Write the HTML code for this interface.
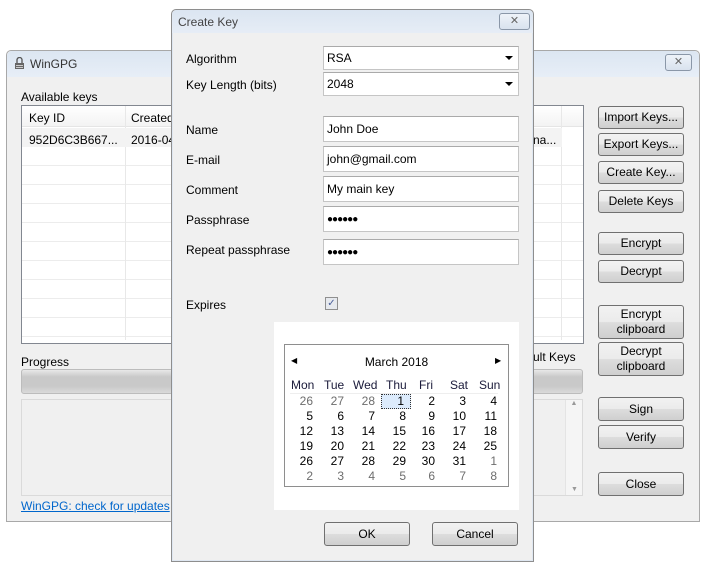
<!DOCTYPE html>
<html><head><meta charset="utf-8"><style>
*{box-sizing:border-box;margin:0;padding:0}
body{width:709px;height:568px;background:#fff;position:relative;overflow:hidden;font-family:"Liberation Sans",sans-serif;font-size:12px;color:#000}
.a{position:absolute}
.btn{position:absolute;border:1px solid #707070;border-radius:3px;background:linear-gradient(#f2f2f2 0%,#ebebeb 50%,#dddddd 51%,#cfcfcf 100%);text-align:center;font-size:12px;display:flex;align-items:center;justify-content:center;line-height:15px;color:#000}
.tb{position:absolute;background:#fff;border:1px solid #c5c5c5;border-top-color:#aaa;padding-left:3px;font-size:12px;display:flex;align-items:center}
.lbl{position:absolute;font-size:12px}
.cal span{position:absolute;width:22px;text-align:right;font-family:"Liberation Sans",sans-serif;font-size:12px}
.g{color:#6d6d6d}
.arr{position:absolute;right:5px;top:9px;width:0;height:0;border-left:4px solid transparent;border-right:4px solid transparent;border-top:4px solid #000}
</style></head><body>
<div class="a" style="left:6px;top:50px;width:694px;height:472px;background:#f0f0f0;border:1px solid #a8a8a8;border-radius:5px 5px 0 0;"></div>
<div class="a" style="left:7px;top:51px;width:692px;height:26px;background:linear-gradient(#dce6f2,#e7eef7);border-radius:5px 5px 0 0"></div>
<div class="a" style="left:14px;top:57px;width:11px;height:13px">
<svg width="11" height="13"><path d="M3 6V3a2.5 2.5 0 015 0v3" fill="none" stroke="#555" stroke-width="1.3"/><rect x="1" y="6" width="9" height="6" fill="#666"/><rect x="2" y="8" width="7" height="1" fill="#ccc"/><rect x="2" y="10" width="7" height="1" fill="#ccc"/></svg></div>
<div class="lbl" style="left:30px;top:57px;font-size:12px;color:#333">WinGPG</div>
<div class="a" style="left:665px;top:54px;width:27px;height:17px;border:1px solid #8a97a8;border-radius:3px;background:linear-gradient(#eef3f9,#d9e2ee);text-align:center;font-size:11px;line-height:14px;color:#666">✕</div>
<div class="lbl" style="left:21px;top:90px">Available keys</div>
<div class="a" style="left:21px;top:105px;width:563px;height:239px;background:#fff;border:1px solid #828790"></div>
<div class="a" style="left:22px;top:106px;width:561px;height:21px;background:linear-gradient(#fff,#f3f3f3);border-bottom:1px solid #e5e5e5"></div>
<div class="a" style="left:125px;top:106px;width:1px;height:234px;background:#e8e8e8"></div>
<div class="a" style="left:561px;top:106px;width:1px;height:234px;background:#e8e8e8"></div>
<div class="lbl" style="left:29px;top:111px">Key ID</div>
<div class="lbl" style="left:131px;top:111px">Created</div>
<div class="a" style="left:22px;top:128px;width:540px;height:19px;background:#f3f3f3"></div>
<div class="lbl" style="left:29px;top:133px">952D6C3B667...</div>
<div class="lbl" style="left:131px;top:133px">2016-04</div>
<div class="lbl" style="left:533px;top:133px">na...</div>
<div class="a" style="left:22px;top:147px;width:561px;height:192px;background:repeating-linear-gradient(#fff 0 18px,#ececec 18px 19px)"></div>
<div class="a" style="left:125px;top:147px;width:1px;height:192px;background:#e8e8e8"></div>
<div class="a" style="left:561px;top:147px;width:1px;height:192px;background:#e8e8e8"></div>
<div class="lbl" style="left:21px;top:355px">Progress</div>
<div class="lbl" style="left:533px;top:350px">ult Keys</div>
<div class="a" style="left:21px;top:369px;width:562px;height:25px;border:1px solid #bcbcbc;border-radius:3px;background:linear-gradient(#e8e8e8,#c9c9c9 30%,#c9c9c9 70%,#dadada)"></div>
<div class="a" style="left:21px;top:399px;width:562px;height:97px;border:1px solid #dadada;background:#f0f0f0"></div>
<div class="a" style="left:565px;top:400px;width:17px;height:95px;background:#f5f5f5;border-left:1px solid #e4e4e4;font-size:7px;color:#999;text-align:center">▲<div style="position:absolute;bottom:2px;width:17px">▼</div></div>
<div class="lbl" style="left:21px;top:499px;color:#0066cc;text-decoration:underline">WinGPG: check for updates</div>
<div class="btn" style="left:598px;top:106px;width:86px;height:23px">Import Keys...</div>
<div class="btn" style="left:598px;top:133px;width:86px;height:23px">Export Keys...</div>
<div class="btn" style="left:598px;top:161px;width:86px;height:23px">Create Key...</div>
<div class="btn" style="left:598px;top:190px;width:86px;height:23px">Delete Keys</div>
<div class="btn" style="left:598px;top:232px;width:86px;height:23px">Encrypt</div>
<div class="btn" style="left:598px;top:260px;width:86px;height:23px">Decrypt</div>
<div class="btn" style="left:598px;top:305px;width:86px;height:34px">Encrypt<br>clipboard</div>
<div class="btn" style="left:598px;top:342px;width:86px;height:34px">Decrypt<br>clipboard</div>
<div class="btn" style="left:598px;top:397px;width:86px;height:24px">Sign</div>
<div class="btn" style="left:598px;top:425px;width:86px;height:24px">Verify</div>
<div class="btn" style="left:598px;top:472px;width:86px;height:24px">Close</div>

<div class="a" style="left:171px;top:9px;width:363px;height:553px;background:#f0f0f0;border:1px solid #8e8e8e;border-radius:5px 5px 0 0;box-shadow:0 0 0 1px #dfe7f1 inset"></div>
<div class="a" style="left:172px;top:10px;width:361px;height:23px;background:linear-gradient(#dbe5f1,#e6edf6);border-radius:5px 5px 0 0"></div>
<div class="lbl" style="left:178px;top:15px;color:#444">Create Key</div>
<div class="a" style="left:499px;top:13px;width:31px;height:17px;border:1px solid #8a97a8;border-radius:3px;background:linear-gradient(#eef3f9,#d9e2ee);text-align:center;font-size:11px;line-height:14px;color:#666">✕</div>
<div class="lbl" style="left:186px;top:52px">Algorithm</div>
<div class="lbl" style="left:186px;top:78px">Key Length (bits)</div>
<div class="tb" style="left:323px;top:46px;width:196px;height:24px;align-items:flex-start;padding-top:4px">RSA<span class="arr"></span></div>
<div class="tb" style="left:323px;top:72px;width:196px;height:24px;align-items:flex-start;padding-top:4px">2048<span class="arr"></span></div>
<div class="lbl" style="left:186px;top:123px">Name</div>
<div class="lbl" style="left:186px;top:153px">E-mail</div>
<div class="lbl" style="left:186px;top:183px">Comment</div>
<div class="lbl" style="left:186px;top:213px">Passphrase</div>
<div class="lbl" style="left:186px;top:243px">Repeat passphrase</div>
<div class="tb" style="left:323px;top:116px;width:196px;height:26px;align-items:flex-start;padding-top:5px">John Doe</div>
<div class="tb" style="left:323px;top:146px;width:196px;height:26px;align-items:flex-start;padding-top:5px">john@gmail.com</div>
<div class="tb" style="left:323px;top:176px;width:196px;height:26px;align-items:flex-start;padding-top:5px">My main key</div>
<div class="tb" style="left:323px;top:206px;width:196px;height:26px;font-size:10px;letter-spacing:-1px">●●●●●●</div>
<div class="tb" style="left:323px;top:239px;width:196px;height:26px;font-size:10px;letter-spacing:-1px">●●●●●●</div>
<div class="lbl" style="left:186px;top:298px">Expires</div>
<div class="a" style="left:325px;top:297px;width:13px;height:13px;border:1px solid #8f8f8f;background:#e6e9ee;font-size:10px;line-height:11px;text-align:center;color:#4a5f9a">✓</div>
<div class="a" style="left:274px;top:322px;width:245px;height:188px;background:#fff"></div>
<div class="a cal" style="left:284px;top:344px;width:225px;height:143px;border:1px solid #8e8e8e;background:#fff">
<div class="a" style="left:6px;top:11px;font-size:8px">◀</div>
<div class="a" style="left:210px;top:11px;font-size:8px">▶</div>
<div class="a" style="left:0;width:223px;top:10px;text-align:center;font-size:12px">March 2018</div>
<div class="a" style="top:33px;left:0;width:223px;font-size:12px;color:#1a1a3a">
<span style="left:6px;width:28px;text-align:left">Mon</span><span style="left:39px;text-align:left">Tue</span><span style="left:68px;width:28px;text-align:left">Wed</span><span style="left:101px;text-align:left">Thu</span><span style="left:134px;text-align:left">Fri</span><span style="left:165px;text-align:left">Sat</span><span style="left:194px;text-align:left;width:26px">Sun</span></div>
<div class="a" style="left:5px;top:48px;width:208px;height:1px;background:#eee"></div>
<div class="a" style="left:96px;top:49px;width:30px;height:15px;border:1px dotted #333;background:#dcebfc"></div>
<div class="a" style="left:0;top:49px">
<span class="g" style="left:6px">26</span><span class="g" style="left:37px">27</span><span class="g" style="left:68px">28</span><span style="left:97px">1</span><span style="left:128px">2</span><span style="left:159px">3</span><span style="left:190px">4</span>
</div>
<div class="a" style="left:0;top:64px">
<span style="left:6px">5</span><span style="left:37px">6</span><span style="left:68px">7</span><span style="left:99px">8</span><span style="left:128px">9</span><span style="left:159px">10</span><span style="left:190px">11</span>
</div>
<div class="a" style="left:0;top:79px">
<span style="left:6px">12</span><span style="left:37px">13</span><span style="left:68px">14</span><span style="left:99px">15</span><span style="left:128px">16</span><span style="left:159px">17</span><span style="left:190px">18</span>
</div>
<div class="a" style="left:0;top:94px">
<span style="left:6px">19</span><span style="left:37px">20</span><span style="left:68px">21</span><span style="left:99px">22</span><span style="left:128px">23</span><span style="left:159px">24</span><span style="left:190px">25</span>
</div>
<div class="a" style="left:0;top:109px">
<span style="left:6px">26</span><span style="left:37px">27</span><span style="left:68px">28</span><span style="left:99px">29</span><span style="left:128px">30</span><span style="left:159px">31</span><span class="g" style="left:190px">1</span>
</div>
<div class="a" style="left:0;top:124px">
<span class="g" style="left:6px">2</span><span class="g" style="left:37px">3</span><span class="g" style="left:68px">4</span><span class="g" style="left:99px">5</span><span class="g" style="left:128px">6</span><span class="g" style="left:159px">7</span><span class="g" style="left:190px">8</span>
</div>
</div>
<div class="btn" style="left:324px;top:522px;width:86px;height:24px">OK</div>
<div class="btn" style="left:432px;top:522px;width:86px;height:24px">Cancel</div>
</body></html>
